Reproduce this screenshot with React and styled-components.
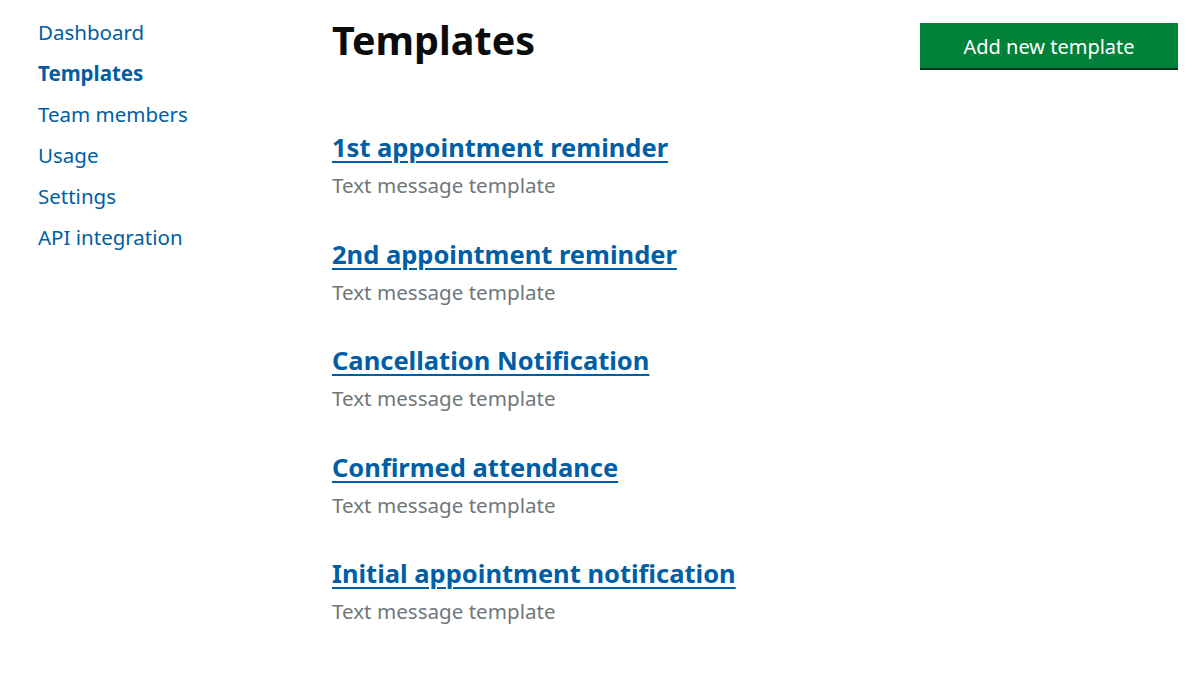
import React from "react";
import styled, { createGlobalStyle } from "styled-components";

const GlobalStyle = createGlobalStyle`
  html, body {
    margin: 0;
    padding: 0;
    background: #fff;
    font-family: "Noto Sans", "Liberation Sans", sans-serif;
    color: #0b0c0c;
  }
`;

const Page = styled.div`
  display: grid;
  grid-template-columns: 294px 1fr;
  padding: 14px 22px 0 38px;
`;

const SideNav = styled.nav`
  display: flex;
  flex-direction: column;
  gap: 13px;
  padding-top: 4px;
`;

const NavLink = styled.a`
  font-size: 20.5px;
  line-height: 28px;
  color: #005ea5;
  text-decoration: none;
  font-weight: ${(p) => (p.$active ? 700 : 400)};
`;

const Main = styled.main`
  display: flex;
  flex-direction: column;
`;

const Header = styled.div`
  display: flex;
  justify-content: space-between;
  align-items: flex-start;
`;

const Title = styled.h1`
  margin: 0;
  font-size: 39.5px;
  line-height: 52px;
  font-weight: 700;
`;

const AddButton = styled.button`
  width: 258px;
  height: 45px;
  margin-top: 9px;
  border: 0;
  background: #00823b;
  box-shadow: 0 2px 0 #003618;
  color: #fff;
  font-family: inherit;
  font-size: 20px;
  padding-top: 2px;
  cursor: pointer;
`;

const TemplateList = styled.ul`
  list-style: none;
  margin: 62px 0 0;
  padding: 0;
  display: flex;
  flex-direction: column;
  gap: 36.5px;
`;

const TemplateItem = styled.li`
  display: flex;
  flex-direction: column;
  gap: 6px;
`;

const TemplateLink = styled.a`
  font-size: 25.5px;
  line-height: 34px;
  font-weight: 700;
  color: #005ea5;
  text-decoration: underline;
  text-underline-offset: 4px;
  text-decoration-thickness: 2px;
  align-self: flex-start;
`;

const Hint = styled.span`
  font-size: 20.6px;
  line-height: 30px;
  color: #6f777b;
`;

const navItems = [
  "Dashboard",
  "Templates",
  "Team members",
  "Usage",
  "Settings",
  "API integration",
];

const templates = [
  "1st appointment reminder",
  "2nd appointment reminder",
  "Cancellation Notification",
  "Confirmed attendance",
  "Initial appointment notification",
];

const App = () => {
  return (
    <>
      <GlobalStyle />
      <Page>
        <SideNav>
          {navItems.map((item) => (
            <NavLink key={item} href="#" $active={item === "Templates"}>
              {item}
            </NavLink>
          ))}
        </SideNav>
        <Main>
          <Header>
            <Title>Templates</Title>
            <AddButton>Add new template</AddButton>
          </Header>
          <TemplateList>
            {templates.map((name) => (
              <TemplateItem key={name}>
                <TemplateLink href="#">{name}</TemplateLink>
                <Hint>Text message template</Hint>
              </TemplateItem>
            ))}
          </TemplateList>
        </Main>
      </Page>
    </>
  );
};

export default App;
